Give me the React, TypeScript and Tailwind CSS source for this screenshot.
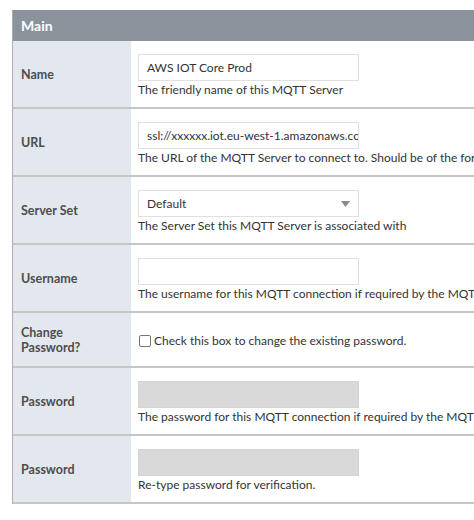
type Row = {
  label: string
  kind: 'text' | 'select' | 'check' | 'disabled'
  value?: string
  help: string
}

const rows: Row[] = [
  { label: 'Name', kind: 'text', value: 'AWS IOT Core Prod', help: 'The friendly name of this MQTT Server' },
  { label: 'URL', kind: 'text', value: 'ssl://xxxxxx.iot.eu-west-1.amazonaws.com:8883', help: 'The URL of the MQTT Server to connect to. Should be of the form ssl://host:port' },
  { label: 'Server Set', kind: 'select', value: 'Default', help: 'The Server Set this MQTT Server is associated with' },
  { label: 'Username', kind: 'text', value: '', help: 'The username for this MQTT connection if required by the MQTT Server' },
  { label: 'Change Password?', kind: 'check', help: 'Check this box to change the existing password.' },
  { label: 'Password', kind: 'disabled', help: 'The password for this MQTT connection if required by the MQTT Server' },
  { label: 'Password', kind: 'disabled', help: 'Re-type password for verification.' },
]

function Field({ row }: { row: Row }) {
  if (row.kind === 'check') {
    return (
      <label className="flex items-center gap-[3px]">
        <span className="w-[12px] h-[12px] rounded-[2px] border border-[#767676] bg-white" />
        <span>{row.help}</span>
      </label>
    )
  }
  return (
    <div className="flex flex-col">
      {row.kind === 'disabled' ? (
        <div className="w-[221px] h-[27px] bg-[#d9d9d9] border border-[#d4d4d4]" />
      ) : row.kind === 'select' ? (
        <div className="w-[221px] h-[27px] bg-white border border-[#e0e0e0] flex items-center justify-between pl-[8px] pr-[8px]">
          <span>{row.value}</span>
          <svg width="9" height="6" viewBox="0 0 9 6"><path d="M0 0h9L4.5 6z" fill="#8a8a8a" /></svg>
        </div>
      ) : (
        <div className="w-[221px] h-[27px] bg-white border border-[#e0e0e0] flex items-center pl-[8px] overflow-hidden whitespace-nowrap">
          <span>{row.value}</span>
        </div>
      )}
      <span className="mt-[1px] leading-[15px] whitespace-nowrap">{row.help}</span>
    </div>
  )
}

export default function App() {
  return (
    <div className="w-[474px] h-[520px] overflow-hidden bg-white font-['Lato','Liberation_Sans',sans-serif]">
      <div className="ml-[12px] mt-[10px] w-[720px] border-l border-[#a9aeb4]">
        {/* Header */}
        <div className="h-[31px] bg-[#8a939c] flex items-center pl-[8px] text-white font-bold text-[14px]">
          Main
        </div>
        {rows.map((r, i) => (
          <div
            key={i}
            className={`flex border-b-2 border-[#c6c6c6] ${r.kind === 'check' ? 'h-[55px]' : 'h-[68px]'}`}
          >
            <div className="w-[118px] shrink-0 bg-[#e3e8ef] flex items-center pl-[8px] pr-[4px] text-[12.5px] font-bold text-[#4d4d4d] leading-[15px]">
              {r.label === 'Change Password?' ? (
                <span>Change<br />Password?</span>
              ) : (
                r.label
              )}
            </div>
            <div className={`flex-1 pl-[7px] text-[12px] text-[#333] ${r.kind === 'check' ? 'flex items-center pl-[8px] pt-[2px]' : 'pt-[13px]'}`}>
              <Field row={r} />
            </div>
          </div>
        ))}
      </div>
    </div>
  )
}
